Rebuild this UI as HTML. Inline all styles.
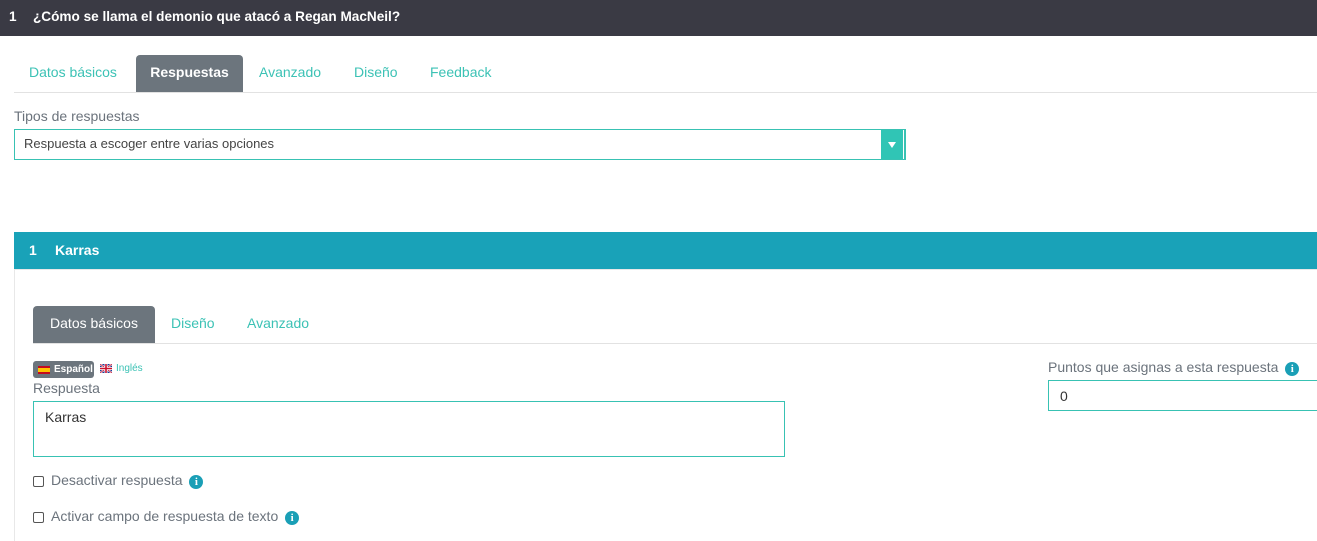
<!DOCTYPE html>
<html><head><meta charset="utf-8"><style>
*{box-sizing:border-box;margin:0;padding:0}
body{width:1317px;height:541px;overflow:hidden;background:#fff;font-family:"Liberation Sans",sans-serif;font-size:14px;color:#6b737c;position:relative}
.a{position:absolute;white-space:nowrap}
.top{left:0;top:0;width:1317px;height:36px;background:#3a3a44;color:#fff;font-weight:bold;font-size:13.6px}
.teal{color:#3cc2b5}
.tab{height:37px;line-height:35px;font-size:14px}
.act{background:#6c757d;color:#fff;border-radius:4px 4px 0 0;text-align:center}
.info{display:inline-block;width:14px;height:14px;border-radius:50%;background:#1a9fb6;color:#fff;font-size:11px;font-weight:bold;line-height:14px;text-align:center;font-family:"Liberation Serif",serif;vertical-align:0px;margin-left:3px}
.cb{width:11px;height:11px;border:1px solid #555;border-radius:2px;background:#fff}
</style></head><body>
<div class="a top"><span class="a" style="left:9px;top:9px">1</span><span class="a" style="left:33px;top:9px">¿Cómo se llama el demonio que atacó a Regan MacNeil?</span></div>

<div class="a" style="left:14px;top:92px;width:1303px;height:1px;background:#e2e2e2"></div>
<div class="a tab act" style="left:136px;top:55px;width:107px;font-weight:bold">Respuestas</div>
<div class="a tab teal" style="left:29px;top:55px">Datos básicos</div>
<div class="a tab teal" style="left:259px;top:55px">Avanzado</div>
<div class="a tab teal" style="left:354px;top:55px">Diseño</div>
<div class="a tab teal" style="left:430px;top:55px">Feedback</div>

<div class="a" style="left:14px;top:108px">Tipos de respuestas</div>
<div class="a" style="left:14px;top:129px;width:892px;height:31px;border:1px solid #38c2b3;border-right:2px solid #38c2b3;color:#444;font-size:13px;padding:6px 0 0 9px">Respuesta a escoger entre varias opciones
<div class="a" style="right:1px;top:0;width:22px;height:29px;background:#30c5b5"><div class="a" style="left:7px;top:12px;width:0;height:0;border-left:4px solid transparent;border-right:4px solid transparent;border-top:6px solid #fff"></div></div></div>

<div class="a" style="left:14px;top:232px;width:1303px;height:37px;background:#19a2b8;color:#fff;font-weight:bold"><span class="a" style="left:15px;top:10px">1</span><span class="a" style="left:41px;top:10px">Karras</span></div>
<div class="a" style="left:14px;top:269px;width:1303px;height:1px;background:#e8e8e8"></div>
<div class="a" style="left:14px;top:269px;width:1px;height:272px;background:#e8e8e8"></div>

<div class="a" style="left:33px;top:343px;width:1284px;height:1px;background:#e2e2e2"></div>
<div class="a tab act" style="left:33px;top:306px;width:122px">Datos básicos</div>
<div class="a tab teal" style="left:171px;top:306px">Diseño</div>
<div class="a tab teal" style="left:247px;top:306px">Avanzado</div>

<div class="a" style="left:33px;top:361px;width:61px;height:17px;background:#6c757d;border-radius:3px;color:#fff;font-size:10px;font-weight:bold;line-height:17px;padding-left:21px">Español
<div class="a" style="left:5px;top:5px;width:12px;height:8px;background:linear-gradient(#c60b1e 25%,#ffc400 25%,#ffc400 75%,#c60b1e 75%)"></div></div>
<svg class="a" style="left:100px;top:364px" width="12" height="9" viewBox="0 0 12 9"><rect width="12" height="9" fill="#1f3a93"/><path d="M0 0L12 9M12 0L0 9" stroke="#fff" stroke-width="2"/><path d="M0 0L12 9M12 0L0 9" stroke="#c8102e" stroke-width="0.8"/><path d="M6 0V9M0 4.5H12" stroke="#fff" stroke-width="3"/><path d="M6 0V9M0 4.5H12" stroke="#c8102e" stroke-width="1.6"/></svg>
<div class="a teal" style="left:116px;top:363px;font-size:10px">Inglés</div>

<div class="a" style="left:33px;top:380px">Respuesta</div>
<div class="a" style="left:33px;top:401px;width:752px;height:56px;border:1px solid #38c2b3;color:#333;padding:7px 0 0 11px">Karras</div>

<div class="a cb" style="left:33px;top:476px"></div>
<div class="a" style="left:51px;top:472px">Desactivar respuesta <span class="info">i</span></div>
<div class="a cb" style="left:33px;top:512px"></div>
<div class="a" style="left:51px;top:508px">Activar campo de respuesta de texto <span class="info">i</span></div>

<div class="a" style="left:1048px;top:359px">Puntos que asignas a esta respuesta <span class="info">i</span></div>
<div class="a" style="left:1048px;top:380px;width:280px;height:31px;border:1px solid #38c2b3;color:#333;padding:7px 0 0 11px">0</div>
</body></html>
